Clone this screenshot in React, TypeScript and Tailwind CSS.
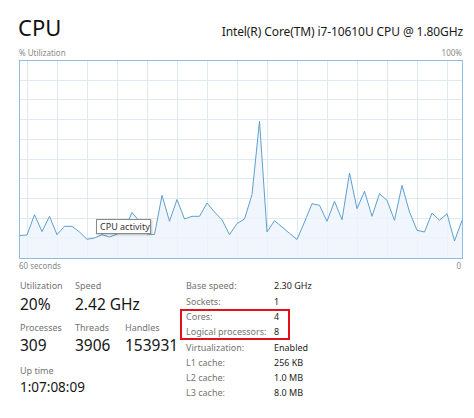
import React from "react"

const usage = [
  233.5, 233, 212.7, 229.5, 214.3, 232.7, 224.3, 224.3, 230, 237.3,
  236, 232.7, 235, 232, 228, 210.5, 219.5, 232, 232.5, 193.3,
  219.3, 197.5, 217, 214.3, 214.3, 201, 210, 217.8, 232.7, 221.5,
  217, 192.5, 119, 230, 218.7, 225, 231.3, 237.5, 220, 201.7,
  203.3, 219.3, 199.3, 217.7, 171, 206.7, 189.3, 214.3, 191.7, 198.3,
  218.3, 183.3, 210, 228.3, 230, 211, 218.3, 211.7, 239, 218.3,
]

const details: [string, string][] = [
  ["Base speed:", "2.30 GHz"],
  ["Sockets:", "1"],
  ["Cores:", "4"],
  ["Logical processors:", "8"],
  ["Virtualization:", "Enabled"],
  ["L1 cache:", "256 KB"],
  ["L2 cache:", "1.0 MB"],
  ["L3 cache:", "8.0 MB"],
]

function Graph() {
  const pts = usage.map((y, i) => `${19.5 + i * 7.5},${y}`).join(" ")
  const rows = [1, 2, 3, 4, 5, 6, 7, 8, 9].map((k) => Math.round(59 + 19.7 * k) - 0.5)
  const cols = Array.from({ length: 15 }, (_, k) => 27.5 + k * 30)

  return (
    <div className="relative ml-[19px] mt-[1px] h-[199px] w-[444px] border border-[#8fbde0]">
      <svg width="442" height="197" viewBox="20 59 442 197" className="block">
        {rows.map((y) => (
          <line key={y} x1="20" x2="462" y1={y} y2={y} stroke="#dde9f3" strokeWidth="1" />
        ))}
        {cols.map((x) => (
          <line key={x} x1={x} x2={x} y1="59" y2="256" stroke="#dde9f3" strokeWidth="1" />
        ))}
        <polygon points={`19.5,256 ${pts} 462,256`} fill="#edf4fa" fillOpacity="0.85" />
        <polyline points={pts} fill="none" stroke="#5f9fd0" strokeWidth="1" strokeLinejoin="round" />
      </svg>
      <div className="absolute left-[76px] top-[158px] h-[15px] w-[55px] whitespace-nowrap border border-[#8a8a8a] bg-white pl-[3px] text-[9px] leading-[13px] text-[#333] shadow-[1px_1px_2px_rgba(0,0,0,0.25)]">
        CPU activity
      </div>
    </div>
  )
}

function Stat({ label, value, size = "big" }: { label: string; value: string; size?: "big" | "small" }) {
  return (
    <div className="flex flex-col whitespace-nowrap">
      <div className="text-[9px] leading-[15.3px] text-[#747474]">{label}</div>
      <div
        className={
          size === "big"
            ? "text-[15.5px] leading-[21px] text-[#161616]"
            : "text-[13.5px] leading-[19.6px] text-[#161616]"
        }
      >
        {value}
      </div>
    </div>
  )
}

function DetailRow({ label, value }: { label: string; value: string }) {
  return (
    <div className="flex h-[15.3px] items-center whitespace-nowrap text-[9px] leading-[15.3px]">
      <span className="w-[88px] text-[#747474]">{label}</span>
      <span className="text-[#1e1e1e]">{value}</span>
    </div>
  )
}

export default function App() {
  return (
    <div
      className="h-[418px] w-[474px] overflow-hidden bg-white"
      style={{ fontFamily: '"Noto Sans", "Open Sans", sans-serif' }}
    >
      <div className="flex items-baseline justify-between pl-[18px] pr-[11px] pt-[16px]">
        <h1 className="text-[22px] leading-[22px] text-[#111]">CPU</h1>
        <div className="text-[12px] leading-[16px] tracking-[-0.1px] text-[#1a1a1a]">
          Intel(R) Core(TM) i7-10610U CPU @ 1.80GHz
        </div>
      </div>

      <div className="mt-[7px] flex justify-between pl-[19px] pr-[12px] text-[8px] leading-[12px] text-[#8a8a8a]">
        <span>% Utilization</span>
        <span>100%</span>
      </div>

      <Graph />

      <div className="mt-[1px] flex justify-between pl-[19px] pr-[13px] text-[8px] leading-[12px] text-[#8a8a8a]">
        <span>60 seconds</span>
        <span>0</span>
      </div>

      <div className="mt-[6.4px] flex">
        <div className="flex w-[166px] flex-col pl-[20px]">
          <div className="grid grid-cols-[55px_50px_auto]">
            <Stat label="Utilization" value="20%" />
            <Stat label="Speed" value="2.42 GHz" />
          </div>
          <div className="mt-[5.5px] grid grid-cols-[55px_50px_auto]">
            <Stat label="Processes" value="309" />
            <Stat label="Threads" value="3906" />
            <Stat label="Handles" value="153931" />
          </div>
          <div className="mt-[6.5px]">
            <Stat label="Up time" value="1:07:08:09" size="small" />
          </div>
        </div>

        <div className="flex flex-col pl-[20px]">
          {details.slice(0, 2).map(([l, v]) => (
            <DetailRow key={l} label={l} value={v} />
          ))}
          <div className="-ml-[6px] w-[110px] pl-[6px] outline-2 -outline-offset-2 outline-[#e3101b]">
            {details.slice(2, 4).map(([l, v]) => (
              <DetailRow key={l} label={l} value={v} />
            ))}
          </div>
          {details.slice(4).map(([l, v]) => (
            <DetailRow key={l} label={l} value={v} />
          ))}
        </div>
      </div>
    </div>
  )
}
